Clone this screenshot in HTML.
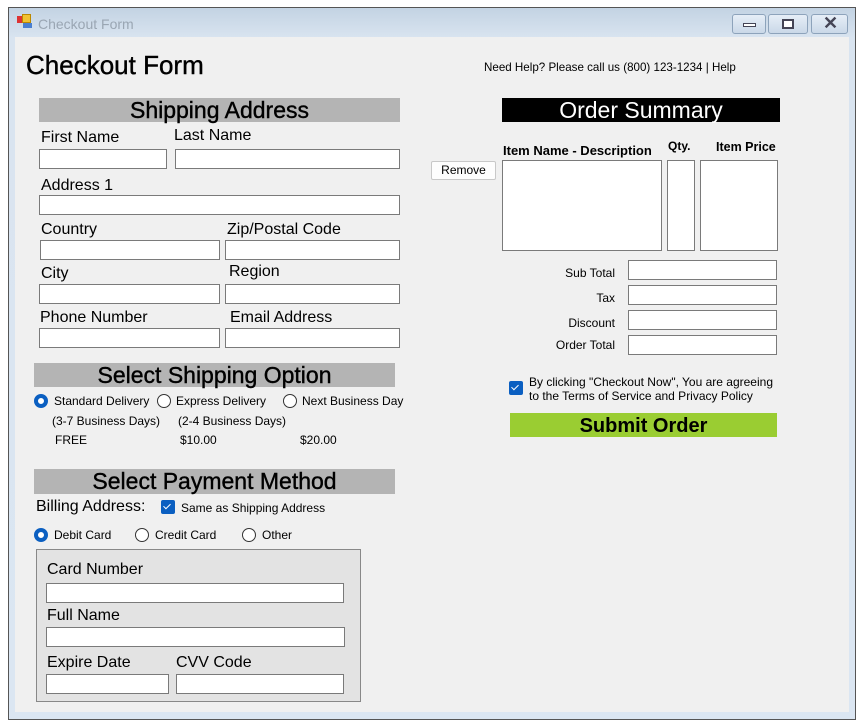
<!DOCTYPE html>
<html><head><meta charset="utf-8"><style>
*{margin:0;padding:0;box-sizing:border-box}
body{width:867px;height:727px;background:#fff;position:relative;overflow:hidden;font-family:"Liberation Sans",Arial,sans-serif;color:#000}
.a{position:absolute;white-space:nowrap}
.win{position:absolute;left:8px;top:7px;width:848px;height:713px;border:1px solid #555;background:linear-gradient(#c3d3e3,#d9e4f0 30px,#dbe6f2)}
.client{position:absolute;left:15px;top:37px;width:834px;height:675px;background:#f0f0f0}
.in{position:absolute;background:#fff;border:1px solid #7a7a7a}
.bar{position:absolute;background:#b4b4b4;text-align:center;font-size:23px;line-height:25px;-webkit-text-stroke:0.4px #000}
.l16{font-size:16px}
.s12{font-size:12px}
.rad{position:absolute;width:14px;height:14px;border-radius:50%;border:1px solid #333;background:#fff}
.rad.on{border:4px solid #0b5fc1}
.chk{position:absolute;width:14px;height:14px;background:#0b5fc1;border-radius:2px}
.chk:after{content:"";position:absolute;left:4px;top:2px;width:3px;height:6px;border:solid #fff;border-width:0 1.5px 1.5px 0;transform:rotate(45deg)}
.tb{position:absolute;top:14px;height:20px;border:1px solid #8da3bb;border-radius:3px;background:linear-gradient(#e6eef7,#cad8e8)}
.r{text-align:right}
</style></head><body>
<div class="win"></div>
<div class="a" style="left:17px;top:16px;width:7px;height:7px;background:#d33"></div>
<div class="a" style="left:22px;top:14px;width:9px;height:9px;background:#f1c232;border:1px solid #b80"></div>
<div class="a" style="left:23px;top:23px;width:9px;height:5px;background:#4a7fd0"></div>
<div class="a" style="left:38px;top:16px;font-size:14px;color:#9aa6b3">Checkout Form</div>
<div class="tb" style="left:732px;width:34px"><div class="a" style="left:10px;top:8px;width:13px;height:4px;border:1px solid #445;background:#fff"></div></div>
<div class="tb" style="left:768px;width:40px"><div class="a" style="left:13px;top:4px;width:12px;height:10px;border:2px solid #445;background:#fff"></div></div>
<div class="tb" style="left:811px;width:37px"><div class="a" style="left:11px;top:-2px;font-size:18px;color:#445;font-weight:bold">✕</div></div>
<div class="client"></div>

<div class="a" style="left:26px;top:50px;font-size:26px;-webkit-text-stroke:0.4px #000">Checkout Form</div>
<div class="a" style="left:484px;top:61px;font-size:11.6px">Need Help? Please call us (800) 123-1234 | Help</div>

<div class="bar" style="left:39px;top:98px;width:361px;height:24px">Shipping Address</div>
<div class="a l16" style="left:41px;top:129px">First Name</div>
<div class="a l16" style="left:174px;top:127px">Last Name</div>
<div class="in" style="left:39px;top:149px;width:128px;height:20px"></div>
<div class="in" style="left:175px;top:149px;width:225px;height:20px"></div>
<div class="a l16" style="left:41px;top:177px">Address 1</div>
<div class="in" style="left:39px;top:195px;width:361px;height:20px"></div>
<div class="a l16" style="left:41px;top:221px">Country</div>
<div class="a l16" style="left:227px;top:221px">Zip/Postal Code</div>
<div class="in" style="left:40px;top:240px;width:180px;height:20px"></div>
<div class="in" style="left:225px;top:240px;width:175px;height:20px"></div>
<div class="a l16" style="left:41px;top:265px">City</div>
<div class="a l16" style="left:229px;top:263px">Region</div>
<div class="in" style="left:39px;top:284px;width:181px;height:20px"></div>
<div class="in" style="left:225px;top:284px;width:175px;height:20px"></div>
<div class="a l16" style="left:40px;top:309px">Phone Number</div>
<div class="a l16" style="left:230px;top:309px">Email Address</div>
<div class="in" style="left:39px;top:328px;width:181px;height:20px"></div>
<div class="in" style="left:225px;top:328px;width:175px;height:20px"></div>

<div class="bar" style="left:34px;top:363px;width:361px;height:24px">Select Shipping Option</div>
<div class="rad on" style="left:34px;top:394px"></div>
<div class="a s12" style="left:54px;top:394px">Standard Delivery</div>
<div class="rad" style="left:157px;top:394px"></div>
<div class="a s12" style="left:176px;top:394px">Express Delivery</div>
<div class="rad" style="left:283px;top:394px"></div>
<div class="a s12" style="left:302px;top:394px">Next Business Day</div>
<div class="a s12" style="left:52px;top:414px">(3-7 Business Days)</div>
<div class="a s12" style="left:178px;top:414px">(2-4 Business Days)</div>
<div class="a s12" style="left:55px;top:433px">FREE</div>
<div class="a s12" style="left:180px;top:433px">$10.00</div>
<div class="a s12" style="left:300px;top:433px">$20.00</div>

<div class="bar" style="left:34px;top:469px;width:361px;height:25px">Select Payment Method</div>
<div class="a l16" style="left:36px;top:498px">Billing Address:</div>
<div class="chk" style="left:161px;top:500px"></div>
<div class="a s12" style="left:181px;top:501px">Same as Shipping Address</div>
<div class="rad on" style="left:34px;top:528px"></div>
<div class="a s12" style="left:54px;top:528px">Debit Card</div>
<div class="rad" style="left:135px;top:528px"></div>
<div class="a s12" style="left:155px;top:528px">Credit Card</div>
<div class="rad" style="left:242px;top:528px"></div>
<div class="a s12" style="left:262px;top:528px">Other</div>

<div class="a" style="left:36px;top:549px;width:325px;height:153px;background:#e3e3e3;border:1px solid #888"></div>
<div class="a l16" style="left:47px;top:561px">Card Number</div>
<div class="in" style="left:46px;top:583px;width:298px;height:20px"></div>
<div class="a l16" style="left:47px;top:607px">Full Name</div>
<div class="in" style="left:46px;top:627px;width:299px;height:20px"></div>
<div class="a l16" style="left:47px;top:654px">Expire Date</div>
<div class="a l16" style="left:176px;top:654px">CVV Code</div>
<div class="in" style="left:46px;top:674px;width:123px;height:20px"></div>
<div class="in" style="left:176px;top:674px;width:168px;height:20px"></div>

<div class="bar" style="left:502px;top:98px;width:278px;height:24px;background:#000;color:#fff;-webkit-text-stroke:0">Order Summary</div>
<div class="a" style="left:503px;top:143px;font-weight:bold;font-size:13px">Item Name - Description</div>
<div class="a s12" style="left:668px;top:139px;font-weight:bold">Qty.</div>
<div class="a" style="left:716px;top:140px;font-weight:bold;font-size:12.5px">Item Price</div>
<div class="a s12" style="left:431px;top:161px;width:65px;height:19px;border:1px solid #c8c8c8;border-radius:2px;background:#fdfdfd;text-align:center;line-height:17px">Remove</div>
<div class="in" style="left:502px;top:160px;width:160px;height:91px"></div>
<div class="in" style="left:667px;top:160px;width:28px;height:91px"></div>
<div class="in" style="left:700px;top:160px;width:78px;height:91px"></div>
<div class="a s12 r" style="left:514px;top:266px;width:101px">Sub Total</div>
<div class="a s12 r" style="left:514px;top:291px;width:101px">Tax</div>
<div class="a s12 r" style="left:514px;top:316px;width:101px">Discount</div>
<div class="a s12 r" style="left:514px;top:338px;width:101px">Order Total</div>
<div class="in" style="left:628px;top:260px;width:149px;height:20px"></div>
<div class="in" style="left:628px;top:285px;width:149px;height:20px"></div>
<div class="in" style="left:628px;top:310px;width:149px;height:20px"></div>
<div class="in" style="left:628px;top:335px;width:149px;height:20px"></div>
<div class="chk" style="left:509px;top:381px"></div>
<div class="a s12" style="left:529px;top:375px;line-height:14px">By clicking "Checkout Now", You are agreeing<br>to the Terms of Service and Privacy Policy</div>
<div class="a" style="left:510px;top:413px;width:267px;height:24px;background:#9acd32;text-align:center;font-size:20px;font-weight:bold;line-height:26px">Submit Order</div>
</body></html>
